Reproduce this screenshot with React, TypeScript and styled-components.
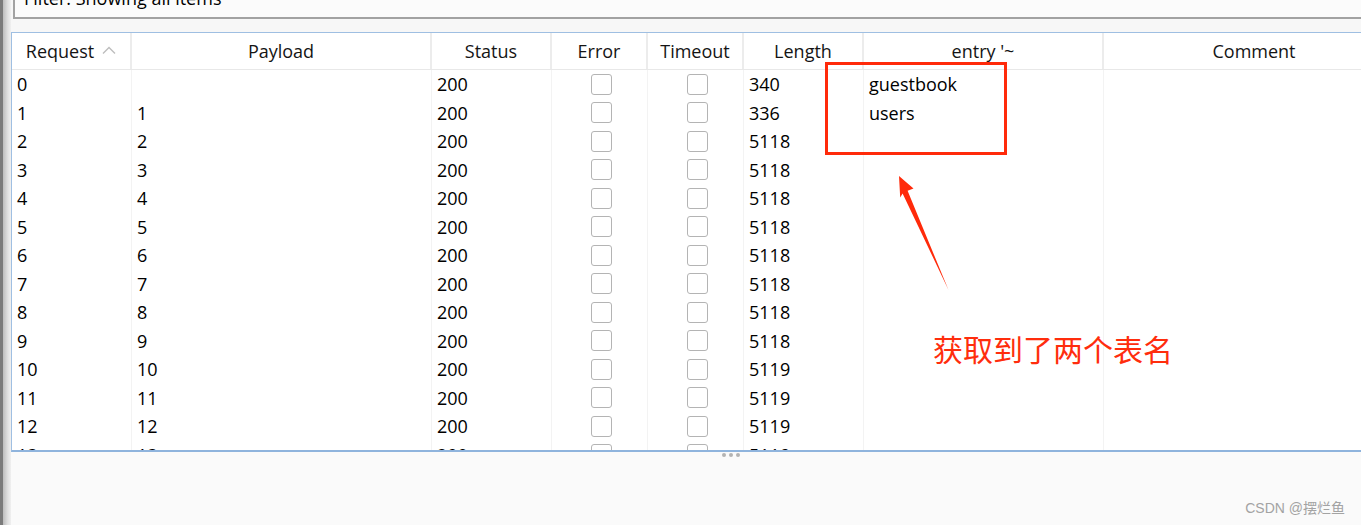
import React from "react";
import styled, { createGlobalStyle } from "styled-components";

const GlobalStyle = createGlobalStyle`
  html, body {
    margin: 0;
    padding: 0;
  }
  body {
    font-family: "Open Sans", "Noto Sans", "Noto Sans CJK SC", sans-serif;
    color: #000;
    overflow: hidden;
  }
`;

const COLS = "120px 300px 120px 96px 96px 120px 240px 300px";

type Row = { id: number; payload: string; status: string; length: string; entry?: string };

const rows: Row[] = Array.from({ length: 14 }, (_, i) => ({
  id: i,
  payload: i === 0 ? "" : String(i),
  status: "200",
  length: i === 0 ? "340" : i === 1 ? "336" : i < 10 ? "5118" : "5119",
  entry: i === 0 ? "guestbook" : i === 1 ? "users" : "",
}));

export default function App() {
  return (
    <>
      <GlobalStyle />
      <Page>
        <LeftRail />
        <Main>
          <FilterBox>
            <FilterText>Filter: Showing all items</FilterText>
          </FilterBox>
          <Gap />
          <Table>
            <HeaderRow>
              <HeaderCell>
                Request
                <SortIcon width="14" height="8" viewBox="0 0 14 8">
                  <polyline points="1,7.5 7,1.5 13,7.5" fill="none" stroke="#bdbdbd" strokeWidth="1.4" />
                </SortIcon>
              </HeaderCell>
              <HeaderCell>Payload</HeaderCell>
              <HeaderCell>Status</HeaderCell>
              <HeaderCell>Error</HeaderCell>
              <HeaderCell>Timeout</HeaderCell>
              <HeaderCell>Length</HeaderCell>
              <HeaderCell>entry '~</HeaderCell>
              <HeaderCell $last>Comment</HeaderCell>
            </HeaderRow>
            <Body>
              {rows.map((r) => (
                <BodyRow key={r.id}>
                  <Cell>{r.id}</Cell>
                  <Cell>{r.payload}</Cell>
                  <Cell>{r.status}</Cell>
                  <CheckCell>
                    <Check />
                  </CheckCell>
                  <CheckCell>
                    <Check />
                  </CheckCell>
                  <Cell>{r.length}</Cell>
                  <Cell>{r.entry}</Cell>
                  <Cell $last />
                </BodyRow>
              ))}
            </Body>
          </Table>
          <BottomPane>
            <Grip>
              <Dot />
              <Dot />
              <Dot />
            </Grip>
            <Watermark>CSDN @摆烂鱼</Watermark>
          </BottomPane>
        </Main>

        <RedFrame />
        <Arrow width="60" height="122" viewBox="895 172 60 122">
          <polygon
            points="899,176 913.5,188.5 907.6,190.8 948.5,290 902.6,193.4 900.2,197.5"
            fill="#ff2a0a"
          />
        </Arrow>
        <Note>获取到了两个表名</Note>
      </Page>
    </>
  );
}

const Page = styled.div`
  position: relative;
  width: 1361px;
  height: 525px;
  display: flex;
  overflow: hidden;
  background: #f6f6f6;
`;

const LeftRail = styled.div`
  flex: none;
  width: 8px;
  border-left: 3px solid #7b7b7b;
  background: linear-gradient(to right, #bdbdbd 0, #e2e2e2 5px, #f0f0f0 8px);
`;

const Main = styled.div`
  flex: 1;
  min-width: 0;
  display: flex;
  flex-direction: column;
  overflow: hidden;
`;

const FilterBox = styled.div`
  box-sizing: border-box;
  height: 19px;
  margin-left: 2px;
  padding-left: 9px;
  border-left: 2px solid #a2a2a2;
  border-bottom: 2px solid #a2a2a2;
  background: #fbfbfb;
  overflow: hidden;
`;

const FilterText = styled.div`
  margin-top: -13px;
  font-size: 18px;
  line-height: 22px;
  white-space: nowrap;
`;

const Gap = styled.div`
  height: 13px;
  background: #f7f7f7;
`;

const Table = styled.div`
  display: flex;
  flex-direction: column;
  background: #fff;
  border-top: 1px solid #9fbfe2;
  border-left: 1px solid #9fbfe2;
  border-bottom: 2px solid #8fb4dd;
  overflow: hidden;
`;

const HeaderRow = styled.div`
  box-sizing: border-box;
  display: grid;
  grid-template-columns: ${COLS};
  height: 37px;
  border-bottom: 1px solid #e8e8e8;
`;

const HeaderCell = styled.div<{ $last?: boolean }>`
  display: flex;
  align-items: center;
  justify-content: center;
  font-size: 18px;
  color: #141414;
  white-space: nowrap;
  border-right: ${(p) => (p.$last ? "none" : "2px solid #ececec")};
`;

const SortIcon = styled.svg`
  margin-left: 8px;
  margin-top: -2px;
`;

const Body = styled.div`
  height: 380px;
  overflow: hidden;
`;

const BodyRow = styled.div`
  display: grid;
  grid-template-columns: ${COLS};
  height: 28.5px;
`;

const Cell = styled.div<{ $last?: boolean }>`
  padding-left: 5px;
  font-size: 18px;
  line-height: 28.5px;
  white-space: nowrap;
  overflow: hidden;
  border-right: ${(p) => (p.$last ? "none" : "1px solid #f3f3f3")};
`;

const CheckCell = styled.div`
  display: flex;
  align-items: center;
  justify-content: center;
  padding-left: 3px;
  border-right: 1px solid #f3f3f3;
`;

const Check = styled.span`
  box-sizing: border-box;
  width: 21px;
  height: 21px;
  border: 1.5px solid #b4b4b4;
  border-radius: 3px;
  background: #fff;
`;

const BottomPane = styled.div`
  position: relative;
  flex: 1;
  display: flex;
  justify-content: flex-end;
  align-items: flex-end;
  padding: 0 16px 8px 0;
  background: #fafafa;
`;

const Grip = styled.div`
  position: absolute;
  top: 1px;
  left: 711px;
  display: flex;
  gap: 3px;
`;

const Dot = styled.span`
  width: 4px;
  height: 4px;
  border-radius: 50%;
  background: #b3b3b3;
`;

const Watermark = styled.div`
  font-family: "Liberation Sans", "Noto Sans CJK SC", sans-serif;
  font-size: 14px;
  line-height: 18px;
  color: #a3a3a3;
`;

const RedFrame = styled.div`
  position: absolute;
  left: 825px;
  top: 62px;
  width: 182px;
  height: 93px;
  box-sizing: border-box;
  border: 3px solid #ff2a0a;
`;

const Arrow = styled.svg`
  position: absolute;
  left: 895px;
  top: 172px;
`;

const Note = styled.div`
  position: absolute;
  left: 933px;
  top: 330px;
  font-family: "Noto Sans CJK SC", sans-serif;
  font-size: 30px;
  line-height: 36px;
  color: #ff2d0d;
  white-space: nowrap;
`;
